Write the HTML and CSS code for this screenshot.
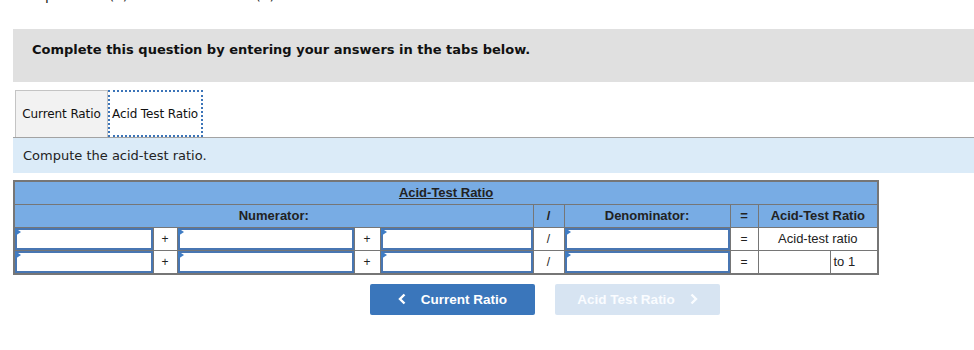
FILE: index.html
```html
<!DOCTYPE html>
<html>
<head>
<meta charset="utf-8">
<link rel="stylesheet" href="styles.css">
</head>
<body>
<div class="page">
  <p class="intro">Compute the (a) current ratio and (b) acid-test ratio.</p>
  <div class="banner">Complete this question by entering your answers in the tabs below.</div>
  <div class="tabs">
    <div class="tab tab-inactive">Current Ratio</div>
    <div class="tab tab-active">Acid Test Ratio</div>
  </div>
  <div class="instruction">Compute the acid-test ratio.</div>
  <table class="ratio">
    <colgroup>
      <col class="c-in1"><col class="c-op1"><col class="c-in2"><col class="c-op2"><col class="c-in3"><col class="c-div"><col class="c-in4"><col class="c-eq"><col class="c-res1"><col class="c-res2">
    </colgroup>
    <tr class="head">
      <th colspan="10"><span class="title">Acid-Test Ratio</span></th>
    </tr>
    <tr class="head">
      <th colspan="5">Numerator:</th>
      <th>/</th>
      <th>Denominator:</th>
      <th>=</th>
      <th colspan="2">Acid-Test Ratio</th>
    </tr>
    <tr>
      <td class="in"><div class="box"><span class="flag"></span></div></td>
      <td class="op">+</td>
      <td class="in"><div class="box"><span class="flag"></span></div></td>
      <td class="op">+</td>
      <td class="in"><div class="box"><span class="flag"></span></div></td>
      <td class="op">/</td>
      <td class="in"><div class="box"><span class="flag"></span></div></td>
      <td class="op">=</td>
      <td class="label" colspan="2">Acid-test ratio</td>
    </tr>
    <tr>
      <td class="in"><div class="box"><span class="flag"></span></div></td>
      <td class="op">+</td>
      <td class="in"><div class="box"><span class="flag"></span></div></td>
      <td class="op">+</td>
      <td class="in"><div class="box"><span class="flag"></span></div></td>
      <td class="op">/</td>
      <td class="in"><div class="box"><span class="flag"></span></div></td>
      <td class="op">=</td>
      <td class="blank"></td>
      <td class="unit">to 1</td>
    </tr>
  </table>
  <div class="nav">
    <button class="btn btn-prev"><svg class="chev" width="8" height="12" viewBox="0 0 8 12"><path d="M6.5 1.5 L2 6 L6.5 10.5" fill="none" stroke="#fff" stroke-width="2.4"/></svg>Current Ratio</button>
    <button class="btn btn-next">Acid Test Ratio<svg class="chev" width="8" height="12" viewBox="0 0 8 12"><path d="M1.5 1.5 L6 6 L1.5 10.5" fill="none" stroke="#fff" stroke-width="2.4"/></svg></button>
  </div>
</div>
</body>
</html>
```
FILE: styles.css
```css
* { box-sizing: border-box; }
html, body { margin: 0; padding: 0; background: #fff; }
body { font-family: Verdana, "DejaVu Sans", sans-serif; color: #111; overflow: hidden; }
.page { width: 974px; height: 350px; overflow: hidden; }
.intro {
  margin: -13px 0 0 13px;
  font-size: 14px;
  line-height: 16px;
  height: 16px;
  color: #222;
  white-space: nowrap;
}
.banner {
  margin: 26px 0 0 13px;
  height: 53px;
  background: #e0e0e0;
  padding: 13px 0 0 19px;
  line-height: 16px;
  font-weight: bold;
  font-size: 13px;
  color: #111;
}
.tabs {
  margin: 8px 0 0 13px;
  padding-left: 2px;
  display: flex;
  height: 48px;
  border-bottom: 1px solid #a3a3a3;
}
.tab {
  display: flex;
  align-items: center;
  font-size: 12px;
  letter-spacing: -0.1px;
  height: 47px;
  color: #111;
  white-space: nowrap;
}
.tab-inactive {
  width: 93px;
  background: #f2f2f2;
  border: 1px solid #c4c4c4;
  border-bottom: none;
  justify-content: center;
}
.tab-active {
  width: 95px;
  background: #fff;
  border: 2px dotted #3b74b8;
  padding-left: 2px;
}
.instruction {
  margin-left: 13px;
  height: 35px;
  background: #dbebf8;
  padding-left: 10px;
  display: flex;
  align-items: center;
  font-size: 13px;
  color: #222;
}
.ratio {
  margin: 7px 0 0 13px;
  border-collapse: collapse;
  table-layout: fixed;
  width: 864px;
  font-family: Arial, "Liberation Sans", sans-serif;
  font-size: 13px;
  border: 2px solid #767676;
}
.c-in1 { width: 139px; }
.c-op1 { width: 24px; }
.c-in2 { width: 177px; }
.c-op2 { width: 26px; }
.c-in3 { width: 153px; }
.c-div { width: 31px; }
.c-in4 { width: 166px; }
.c-eq { width: 28px; }
.c-res1 { width: 72px; }
.c-res2 { width: 48px; }
.ratio tr { height: 23px; }
.ratio th {
  background: #78ace4;
  border: 1px solid #767676;
  padding: 0;
  height: 23px;
  font-weight: bold;
  color: #222;
  text-align: center;
}
.title { text-decoration: underline; }
.ratio td {
  border: 1px solid #767676;
  padding: 0;
  height: 23px;
  text-align: center;
  color: #222;
}
.ratio td.in { padding: 0; }
.box {
  position: relative;
  height: 22px;
  border: 2px solid #4876b2;
  background: #fff;
}
.flag {
  position: absolute;
  left: -2px;
  top: -2px;
  width: 0;
  height: 0;
  border-top: 4px solid transparent;
  border-bottom: 4px solid transparent;
  border-left: 6px solid #3f7cc4;
}
.ratio td.op { font-size: 12px; }
.ratio td.unit { text-align: left; padding-left: 3px; }
.nav {
  margin: 9px 0 0 370px;
  display: flex;
  gap: 20px;
}
.btn {
  width: 165px;
  height: 31px;
  border: none;
  border-radius: 2px;
  font-family: Arial, "Liberation Sans", sans-serif;
  font-weight: bold;
  font-size: 13.5px;
  color: #fff;
  display: flex;
  align-items: center;
  justify-content: center;
  gap: 15px;
  padding: 0;
}
.btn-prev { background: #3a76bb; }
.btn-next { background: #d7e4f2; color: #fafcff; }
.btn-next .chev path { stroke: #fafcff; }
```
